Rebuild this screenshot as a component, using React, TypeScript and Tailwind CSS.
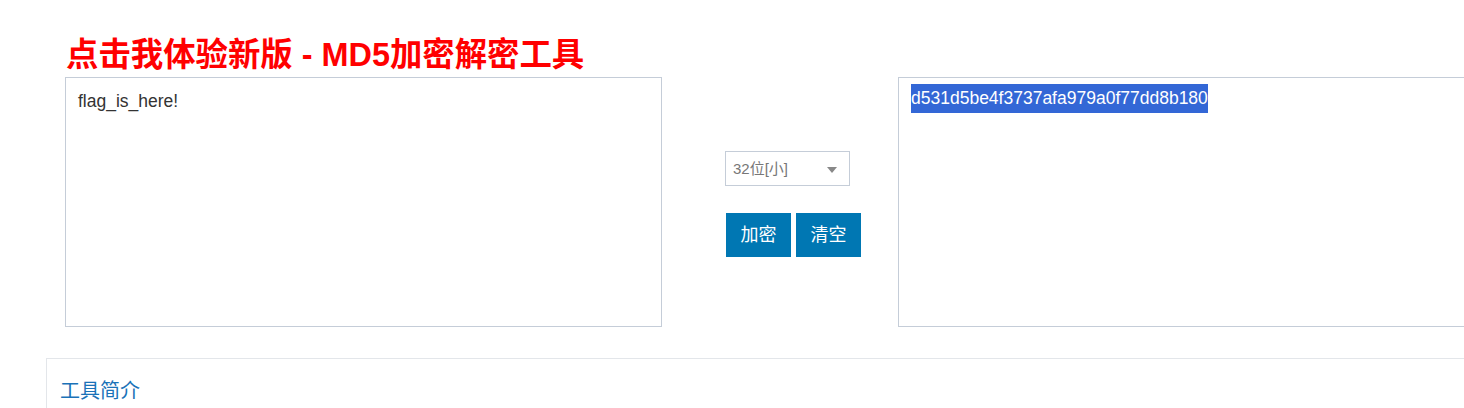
const font = { fontFamily: '"Liberation Sans", "Noto Sans CJK SC", sans-serif' };

export default function App() {
  return (
    <div className="w-[1464px] h-[408px] overflow-hidden bg-white" style={font}>
      <div className="w-[1600px] pl-[65px] pt-[33px]">
        <h1 className="pl-[1px] text-[32.4px] leading-[44px] font-bold text-[#ff0000]">
          点击我体验新版 - MD5加密解密工具
        </h1>

        <div className="flex">
          {/* input */}
          <div className="w-[597px] h-[250px] border border-[#c5cdd8] px-[12px] pt-[11px] text-[17.5px] leading-[24px] text-[#333]">
            flag_is_here!
          </div>

          {/* controls */}
          <div className="w-[236px] pl-[63px] pt-[74px]">
            <div className="relative w-[125px] h-[35px] border border-[#c5cdd8] pl-[7px] text-[15px] leading-[34px] text-[#777]">
              32位[小]
              <span className="absolute right-[12px] top-[15px] w-0 h-0 border-l-[5px] border-r-[5px] border-t-[6px] border-l-transparent border-r-transparent border-t-[#888]" />
            </div>
            <div className="flex gap-[5px] mt-[27px] pl-[1px]">
              <button className="w-[65px] h-[44px] bg-[#0077b3] text-white text-[18px]">加密</button>
              <button className="w-[65px] h-[44px] bg-[#0077b3] text-white text-[18px]">清空</button>
            </div>
          </div>

          {/* output, hash shown selected */}
          <div className="w-[597px] h-[250px] border border-[#c5cdd8] pl-[12px] pt-[6px] text-[17.5px] text-white">
            <span className="inline-block leading-[29px] bg-[#3367d6]">d531d5be4f3737afa979a0f77dd8b180</span>
          </div>
        </div>
      </div>

      <div className="ml-[46px] mt-[31px] w-[1500px] h-[100px] border border-[#e3e6ea] pl-[13px] pt-[18px]">
        <h2 className="text-[20px] leading-[28px] text-[#1a72b8]">工具简介</h2>
      </div>
    </div>
  );
}
